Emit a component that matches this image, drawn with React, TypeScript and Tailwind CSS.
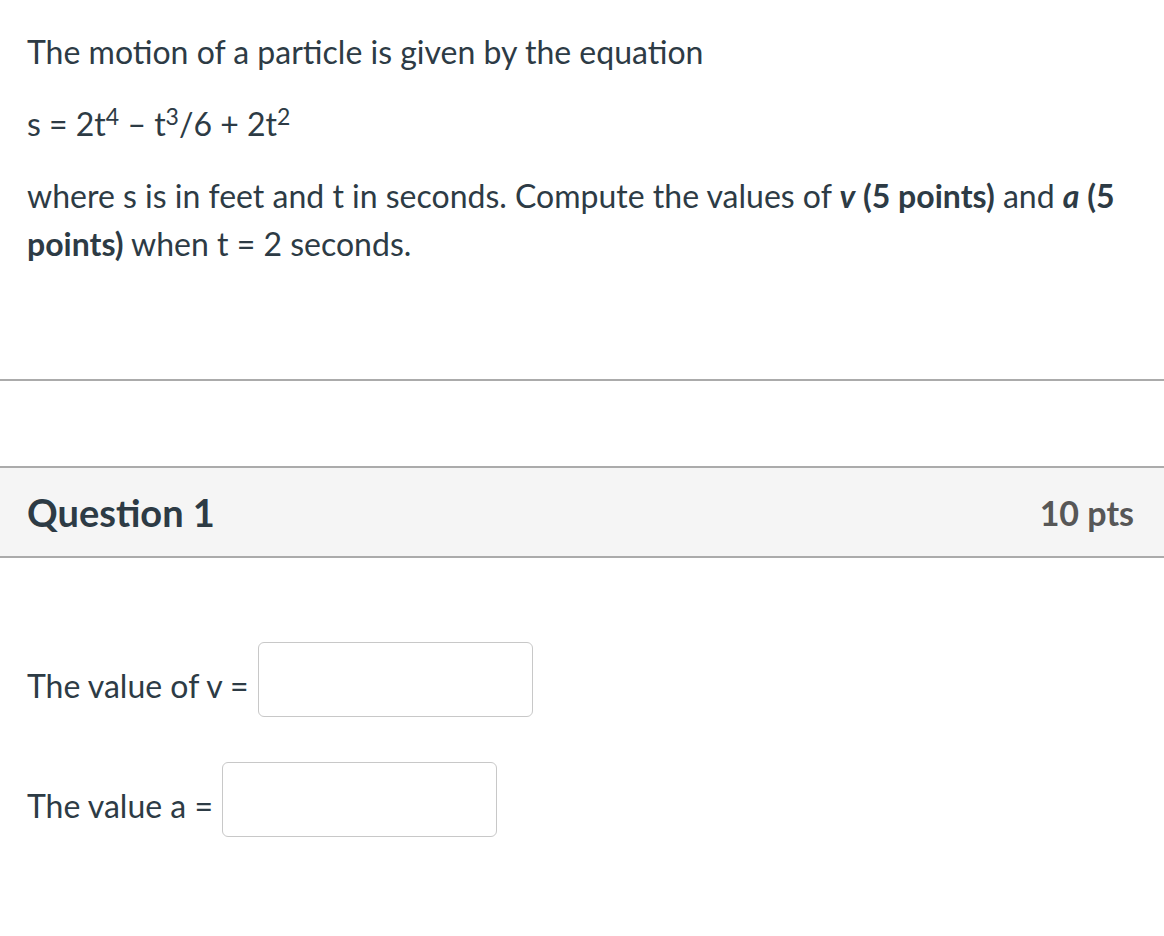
import React from 'react';

const font = { fontFamily: 'Lato, "Open Sans", sans-serif' };

export default function App() {
  return (
    <div className="min-h-screen bg-white text-[#2d3b45] overflow-hidden" style={font}>
      {/* Texto da questão */}
      <div className="px-[27px] pt-[28px] text-[32px] leading-[48px]">
        <p>The motion of a particle is given by the equation</p>
        <p className="mt-[24px]">
          s = 2t<sup className="text-[23px]">4</sup> – t<sup className="text-[23px]">3</sup>/6 + 2t
          <sup className="text-[23px]">2</sup>
        </p>
        <p className="mt-[24px]">
          where s is in feet and t in seconds. Compute the values of{' '}
          <strong className="font-bold">
            <em>v</em> (5 points)
          </strong>{' '}
          and{' '}
          <strong className="font-bold">
            <em>a</em> (5 points)
          </strong>{' '}
          when t = 2 seconds.
        </p>
      </div>

      <div className="mt-[111px] h-[2px] bg-[#ababab]" />

      {/* Cabeçalho da questão */}
      <div className="mt-[85px] h-[92px] bg-[#f5f5f5] border-y-2 border-[#ababab] flex items-center justify-between pl-[27px] pr-[30px]">
        <h2 className="text-[38px] font-bold text-[#2d3b45]">Question 1</h2>
        <span className="text-[34px] font-bold text-[#575757]">10 pts</span>
      </div>

      {/* Respostas */}
      <div className="px-[27px] pt-[84px] text-[32px]">
        <div className="flex items-center gap-[9px]">
          <span className="mt-[12px]">The value of v =</span>
          <input className="w-[275px] h-[75px] border border-[#c8c8c8] rounded-[6px] outline-none" />
        </div>
        <div className="flex items-center gap-[9px] mt-[45px]">
          <span className="mt-[12px]">The value a =</span>
          <input className="w-[275px] h-[75px] border border-[#c8c8c8] rounded-[6px] outline-none" />
        </div>
      </div>
    </div>
  );
}
